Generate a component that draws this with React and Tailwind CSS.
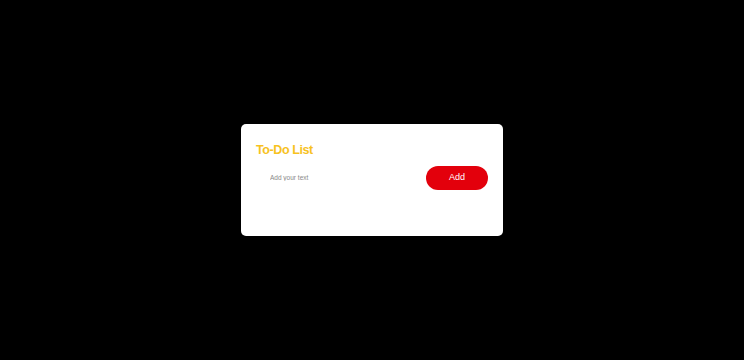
export default function App() {
  return (
    <div className="min-h-screen w-full bg-black flex items-center justify-center font-['Liberation_Sans',Arial,sans-serif]">
      <div className="w-[262px] h-[112px] bg-white rounded-[5px] pt-[19px] pl-[15px] pr-[15px] flex flex-col">
        <h2 className="text-[12.5px] leading-[15px] font-bold text-[#f7c21f] tracking-[-0.4px]">To-Do List</h2>
        <div className="mt-[8px] flex items-center justify-between">
          <input
            type="text"
            placeholder="Add your text"
            className="w-[150px] bg-transparent outline-none pl-[14px] text-[6.5px] placeholder:text-[#888]"
          />
          <button className="w-[62px] h-[24px] rounded-full bg-[#e3000c] text-white text-[9px]">
            Add
          </button>
        </div>
      </div>
    </div>
  );
}
